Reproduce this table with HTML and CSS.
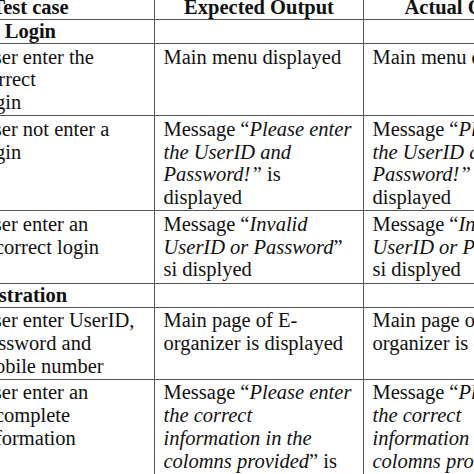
FILE: index.html
```html
<!DOCTYPE html>
<html>
<head>
<meta charset="utf-8">
<link rel="stylesheet" href="styles.css">
</head>
<body>
<div class="viewport">
<table class="cases">
  <colgroup>
    <col class="c-case">
    <col class="c-out">
    <col class="c-out">
  </colgroup>
  <thead>
    <tr class="head">
      <th>Test case</th>
      <th>Expected Output</th>
      <th>Actual Output</th>
    </tr>
  </thead>
  <tbody>
    <tr class="section">
      <td>User Login</td><td></td><td></td>
    </tr>
    <tr class="item">
      <td>User enter the<br>correct<br>login</td>
      <td>Main menu displayed</td>
      <td>Main menu displayed</td>
    </tr>
    <tr class="item">
      <td>User not enter a<br>login</td>
      <td>Message “<i>Please enter<br>the UserID and<br>Password!”</i> is<br>displayed</td>
      <td>Message “<i>Please enter<br>the UserID and<br>Password!”</i> is<br>displayed</td>
    </tr>
    <tr class="item">
      <td>User enter an<br>incorrect login</td>
      <td>Message “<i>Invalid<br>UserID or Password</i>”<br>si displyed</td>
      <td>Message “<i>Invalid<br>UserID or Password</i>”<br>si displyed</td>
    </tr>
    <tr class="section">
      <td>Registration</td><td></td><td></td>
    </tr>
    <tr class="item">
      <td>User enter UserID,<br>password and<br>mobile number</td>
      <td>Main page of E-<br>organizer is displayed</td>
      <td>Main page of E-<br>organizer is displayed</td>
    </tr>
    <tr class="item">
      <td>User enter an<br>incomplete<br>information</td>
      <td>Message “<i>Please enter<br>the correct<br>information in the<br>colomns provided</i>” is<br>displayed</td>
      <td>Message “<i>Please enter<br>the correct<br>information in the<br>colomns provided</i>” is<br>displayed</td>
    </tr>
  </tbody>
</table>
</div>
</body>
</html>
```

FILE: styles.css
```css
html, body {
  margin: 0;
  padding: 0;
  background: #fff;
  overflow: hidden;
}

.viewport {
  width: 474px;
  height: 474px;
  overflow: hidden;
}

.cases {
  border-collapse: collapse;
  table-layout: fixed;
  width: 667px;
  margin-left: -95px;
  margin-top: -5px;
  font-family: "Liberation Serif", "Times New Roman", serif;
  font-size: 20.5px;
  color: #111;
}

.c-case { width: 249px; }
.c-out { width: 209px; }

.cases th,
.cases td {
  border: 1px solid #555;
  vertical-align: top;
  white-space: nowrap;
  overflow: hidden;
  text-align: left;
  padding: 1.6px 8px 1.6px 8.5px;
  line-height: 22.7px;
}

.cases .head th {
  text-align: center;
  font-weight: bold;
  padding: 0 4px;
  line-height: 23px;
}

.cases .section td {
  font-weight: bold;
  padding-top: 0;
  padding-bottom: 0;
  line-height: 23px;
}

.cases .section td:first-child {
  padding-left: 53px;
}

.cases .item td:first-child {
  padding-left: 73px;
}
```
